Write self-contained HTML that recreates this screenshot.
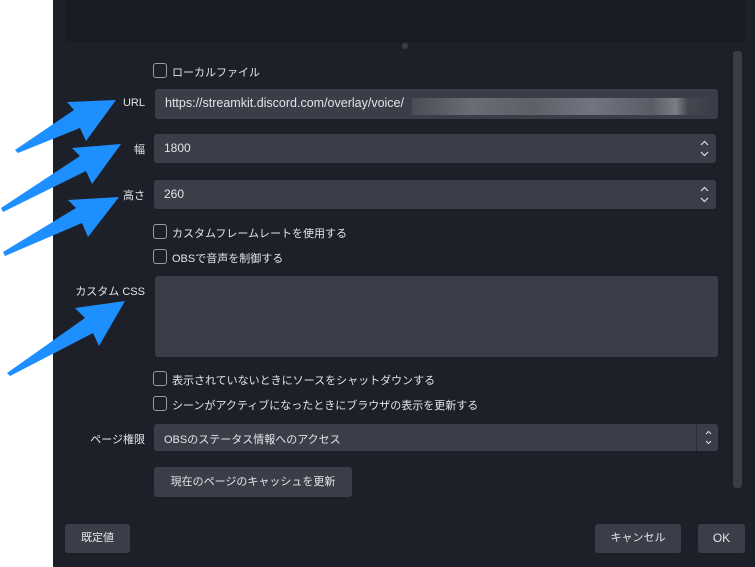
<!DOCTYPE html>
<html><head><meta charset="utf-8"><style>
*{margin:0;padding:0;box-sizing:border-box}
body{width:755px;height:567px;overflow:hidden;background:#fff;position:relative;font-family:"Liberation Sans","Noto Sans CJK JP",sans-serif;color:#e4e4e6;font-size:11px}
.panel{position:absolute;left:53px;top:0;width:702px;height:567px;background:#1e2029}
.prev{position:absolute;left:65px;top:0;width:680px;height:42px;background:#1a1c23}
.dot{position:absolute;left:402px;top:43px;width:6px;height:6px;border-radius:3px;background:#3a3c46}
.sb{position:absolute;left:733px;top:51px;width:9px;height:437px;border-radius:3px;background:#3a3c46}
.f{position:absolute;background:#3b3e49;border-radius:3px;}
.t{position:absolute;white-space:nowrap}
.lbl{position:absolute;right:610px;text-align:right;white-space:nowrap;font-size:11px}
.cb{position:absolute;width:14px;height:15px;border:1px solid #9a9ca4;border-radius:3px}
.spin{position:absolute;right:7px;top:6px}
.btn{position:absolute;background:#3b3e49;border-radius:3px;text-align:center;font-size:11px}
</style></head><body>
<div class="panel"></div>
<div class="prev"></div>
<div class="dot"></div>
<div class="sb"></div>

<div class="cb" style="left:153px;top:63px"></div>
<div class="t" style="left:172px;top:64px">ローカルファイル</div>

<div class="lbl" style="top:97px">URL</div>
<div class="f" style="left:155px;top:89px;width:563px;height:30px"></div>
<div class="t" style="left:165px;top:96px;font-size:12.5px">https://streamkit.discord.com/overlay/voice/</div>
<div style="position:absolute;left:412px;top:98px;width:300px;height:17px;background:linear-gradient(90deg,#4a4c56,#6a6c76 20%,#5e6068 40%,#727480 60%,#5a5c66 80%,#7a7c86 88%,#44464f 92%,#3b3e49)"></div>

<div class="lbl" style="top:141px">幅</div>
<div class="f" style="left:154px;top:134px;width:562px;height:29px"><div class="t" style="left:10px;top:7px;font-size:12px">1800</div>
<svg class="spin" width="9" height="17"><path d="M1 5 L4.5 1.5 L8 5 M1 12 L4.5 15.5 L8 12" stroke="#ddd" stroke-width="1.2" fill="none"/></svg></div>

<div class="lbl" style="top:187px">高さ</div>
<div class="f" style="left:154px;top:180px;width:562px;height:29px"><div class="t" style="left:10px;top:7px;font-size:12px">260</div>
<svg class="spin" width="9" height="17"><path d="M1 5 L4.5 1.5 L8 5 M1 12 L4.5 15.5 L8 12" stroke="#ddd" stroke-width="1.2" fill="none"/></svg></div>

<div class="cb" style="left:153px;top:224px"></div>
<div class="t" style="left:172px;top:225px">カスタムフレームレートを使用する</div>
<div class="cb" style="left:153px;top:249px"></div>
<div class="t" style="left:172px;top:250px">OBSで音声を制御する</div>

<div class="lbl" style="top:283px">カスタム CSS</div>
<div class="f" style="left:155px;top:276px;width:563px;height:81px"></div>

<div class="cb" style="left:153px;top:371px"></div>
<div class="t" style="left:172px;top:372px">表示されていないときにソースをシャットダウンする</div>
<div class="cb" style="left:153px;top:396px"></div>
<div class="t" style="left:172px;top:397px">シーンがアクティブになったときにブラウザの表示を更新する</div>

<div class="lbl" style="top:431px">ページ権限</div>
<div class="f" style="left:154px;top:424px;width:564px;height:27px"><div class="t" style="left:10px;top:7px">OBSのステータス情報へのアクセス</div><div style="position:absolute;left:542px;top:0;width:1px;height:27px;background:#2a2c35"></div>
<svg class="spin" style="right:6px;top:5px" width="7" height="17"><path d="M1 5 L3.5 2.5 L6 5 M1 12 L3.5 14.5 L6 12" stroke="#ddd" stroke-width="1" fill="none"/></svg></div>

<div class="btn" style="left:154px;top:467px;width:198px;height:30px;line-height:30px">現在のページのキャッシュを更新</div>

<div class="btn" style="left:65px;top:524px;width:65px;height:29px;line-height:29px">既定値</div>
<div class="btn" style="left:595px;top:524px;width:86px;height:29px;line-height:29px">キャンセル</div>
<div class="btn" style="left:698px;top:524px;width:47px;height:29px;line-height:29px;font-size:12px">OK</div>

<svg style="position:absolute;left:0;top:0" width="755" height="567">
<g fill="#1e8fff">
<polygon points="116,100 67,102 74,110 15,150 18,153 80,128 86,141"/>
<polygon points="121,144 72,148 80,156 1,208 3,212 86,171 92,184"/>
<polygon points="119,197 68,200 76,208 3,252 5,256 82,223 88,237"/>
<polygon points="125,301 75,308 85,318 7,373 10,376 93,333 99,346"/>
</g>
</svg>
</body></html>
